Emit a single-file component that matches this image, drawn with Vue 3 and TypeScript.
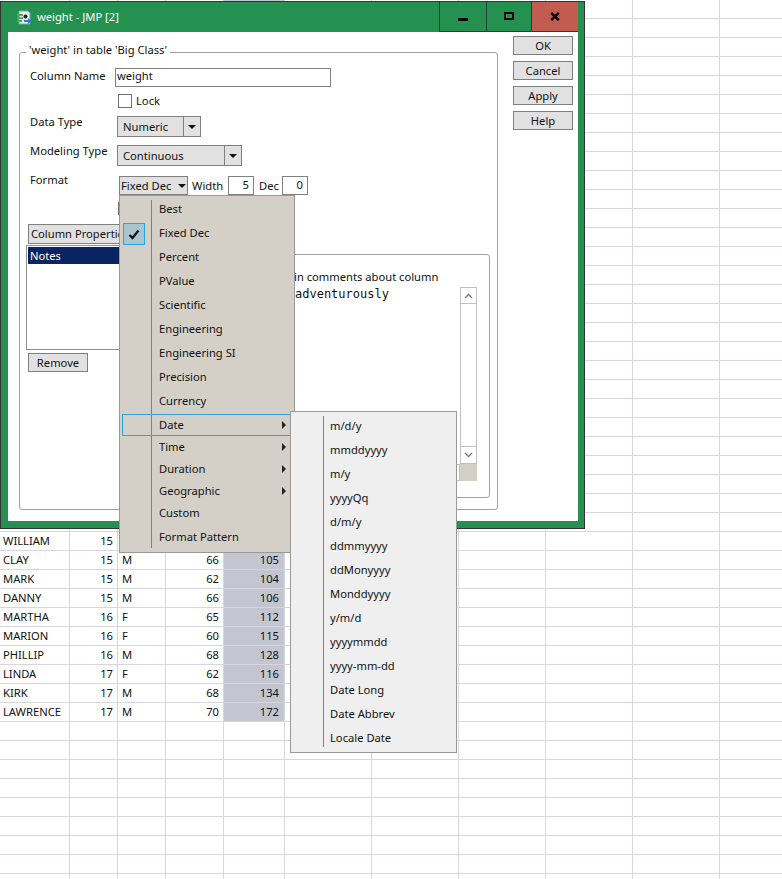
<script setup lang="ts">
interface Row { name: string; age: string; sex: string; height: string; weight: string; selected: boolean }

const visible: [string, string, string, string, string][] = [
  ['WILLIAM', '15', '', '', ''],
  ['CLAY', '15', 'M', '66', '105'],
  ['MARK', '15', 'M', '62', '104'],
  ['DANNY', '15', 'M', '66', '106'],
  ['MARTHA', '16', 'F', '65', '112'],
  ['MARION', '16', 'F', '60', '115'],
  ['PHILLIP', '16', 'M', '68', '128'],
  ['LINDA', '17', 'F', '62', '116'],
  ['KIRK', '17', 'M', '68', '134'],
  ['LAWRENCE', '17', 'M', '70', '172'],
]
const firstVisible = 28
const rows: Row[] = Array.from({ length: 47 }, (_, i) => {
  const v = visible[i - firstVisible]
  return {
    name: v ? v[0] : '', age: v ? v[1] : '', sex: v ? v[2] : '', height: v ? v[3] : '', weight: v ? v[4] : '',
    selected: i < firstVisible + visible.length,
  }
})
const blankCols = [1, 2, 3, 4, 5, 6]

const formats = [
  { label: 'Best' }, { label: 'Fixed Dec', checked: true }, { label: 'Percent' }, { label: 'PValue' },
  { label: 'Scientific' }, { label: 'Engineering' }, { label: 'Engineering SI' }, { label: 'Precision' },
  { label: 'Currency' }, { label: 'Date', sub: true, hot: true }, { label: 'Time', sub: true },
  { label: 'Duration', sub: true }, { label: 'Geographic', sub: true }, { label: 'Custom', short: true },
  { label: 'Format Pattern', last: true },
]
const dates = ['m/d/y', 'mmddyyyy', 'm/y', 'yyyyQq', 'd/m/y', 'ddmmyyyy', 'ddMonyyyy', 'Monddyyyy', 'y/m/d',
  'yyyymmdd', 'yyyy-mm-dd', 'Date Long', 'Date Abbrev', 'Locale Date']
const actions = ['OK', 'Cancel', 'Apply', 'Help']
</script>

<template>
  <div class="desk">
    <div class="sheet">
      <div v-for="(r, i) in rows" :key="i" class="row">
        <div class="cell c-name">{{ r.name }}</div>
        <div class="cell c-age">{{ r.age }}</div>
        <div class="cell c-sex">{{ r.sex }}</div>
        <div class="cell c-height">{{ r.height }}</div>
        <div class="cell c-weight" :class="{ sel: r.selected }">{{ r.weight }}</div>
        <div v-for="c in blankCols" :key="c" class="cell c-blank"></div>
      </div>
    </div>

    <div class="dialog">
      <div class="titlebar">
        <svg class="appicon" width="16" height="16" viewBox="0 0 16 16">
          <path d="M3 1h9l2 2v11H3z" fill="#e8eef4" stroke="#7f9fb8" stroke-width="1" />
          <path d="M1 4h6v2H1zM1 7h6v2H1zM1 10h5v2H1z" fill="#43b649" />
          <circle cx="9.500" cy="6.500" r="2" fill="#222" />
          <path d="M8 10h4V8l3.500 3-3.500 3v-2H8z" fill="#2f7fd0" />
        </svg>
        <span class="title">weight - JMP [2]</span>
        <div class="winbtns">
          <div class="winbtn w-min"><span class="ico-min"></span></div>
          <div class="winbtn w-max"><span class="ico-max"></span></div>
          <div class="winbtn w-close">
            <svg width="10" height="9" viewBox="0 0 10 9"><path d="M1.200 .8l7.600 7.400M8.800 .8L1.200 8.200" stroke="#000" stroke-width="2.400" fill="none" /></svg>
          </div>
        </div>
      </div>

      <div class="client">
        <div class="group">
          <span class="legend">'weight' in table 'Big Class'</span>

          <div class="frow r-name">
            <span class="lbl l-name">Column Name</span>
            <div class="field f-name">weight</div>
          </div>
          <div class="frow r-lock">
            <span class="box"></span><span class="lock-lbl">Lock</span>
          </div>
          <div class="frow r-type">
            <span class="lbl l-sel">Data Type</span>
            <div class="combo c-numeric"><span class="combo-text">Numeric</span><span class="combo-arrow"><i class="tri"></i></span></div>
          </div>
          <div class="frow r-model">
            <span class="lbl l-sel">Modeling Type</span>
            <div class="combo c-cont"><span class="combo-text">Continuous</span><span class="combo-arrow"><i class="tri"></i></span></div>
          </div>
          <div class="frow r-format">
            <span class="lbl l-fmt">Format</span>
            <div class="fmt-btn"><span>Fixed Dec</span><i class="tri"></i></div>
            <span class="w-lbl">Width</span>
            <div class="num n-width">5</div>
            <span class="d-lbl">Dec</span>
            <div class="num n-dec">0</div>
          </div>
          <div class="frow r-hidden"><span class="box small"></span></div>

          <div class="props">
            <div class="props-left">
              <div class="prop-btn">Column Properties</div>
              <div class="listbox"><div class="list-sel">Notes</div></div>
              <div class="btn remove">Remove</div>
            </div>
            <div class="inner">
              <div class="hint">in comments about column</div>
              <div class="memo">
                <div class="memo-text">adventurously</div>
                <div class="vbar">
                  <div class="sbtn">
                    <svg width="9" height="6" viewBox="0 0 9 6"><path d="M1 5l3.500-3.500L8 5" stroke="#777" stroke-width="1.300" fill="none" /></svg>
                  </div>
                  <div class="strack"></div>
                  <div class="sbtn down">
                    <svg width="9" height="6" viewBox="0 0 9 6"><path d="M1 1l3.500 3.500L8 1" stroke="#777" stroke-width="1.300" fill="none" /></svg>
                  </div>
                </div>
                <div class="hbar"></div>
                <div class="corner"></div>
              </div>
            </div>
          </div>
        </div>

        <div class="actions">
          <div v-for="a in actions" :key="a" class="btn action">{{ a }}</div>
        </div>
      </div>
    </div>

    <div class="menu main">
      <div
        v-for="f in formats"
        :key="f.label"
        class="item"
        :class="{ hot: f.hot, sub: f.sub, short: f.short, last: f.last }"
      >
        <span v-if="f.checked" class="check">
          <svg width="12" height="11" viewBox="0 0 12 11"><path d="M1.500 6l3 3L10.500 1.500" stroke="#111" stroke-width="2.300" fill="none" /></svg>
        </span>
        <span>{{ f.label }}</span>
        <i v-if="f.sub" class="sub-arrow"></i>
      </div>
    </div>

    <div class="menu dates">
      <div v-for="d in dates" :key="d" class="item">{{ d }}</div>
    </div>
  </div>
</template>

<style>
html, body { margin: 0; background: #fff; }
</style>

<style scoped>
.desk {
  position: relative;
  width: 782px;
  height: 879px;
  overflow: hidden;
  background: #fff;
  font-family: "Noto Sans", "Liberation Sans", sans-serif;
  font-size: 11.2px;
  color: #111;
}

/* spreadsheet */
.sheet { display: flex; flex-direction: column; }
.row { display: flex; height: 19px; flex: none; }
.cell {
  box-sizing: border-box;
  height: 19px;
  line-height: 15px;
  padding-top: 1px;
  border-right: 1px solid #d6d6e0;
  border-bottom: 1px solid #d6d6e0;
  flex: none;
  white-space: nowrap;
}
.c-name { width: 70px; padding-left: 3px; }
.c-age { width: 48px; padding-right: 4px; text-align: right; }
.c-sex { width: 48px; padding-left: 4px; }
.c-height { width: 58px; padding-right: 4px; text-align: right; }
.c-weight { width: 61px; padding-right: 5px; text-align: right; }
.c-weight.sel { background: #c3c6d0; }
.c-blank { width: 87px; }

/* window */
.dialog {
  position: absolute;
  left: 0;
  top: 1px;
  width: 585px;
  height: 528px;
  box-sizing: border-box;
  border: 1px solid #333;
  background: #259150;
  display: flex;
  flex-direction: column;
}
.titlebar { height: 30px; flex: none; display: flex; align-items: center; padding-left: 15px; }
.appicon { flex: none; margin-top: 1px; }
.title { color: #fff; margin-left: 5px; margin-top: -2px; }
.winbtns { margin-left: auto; margin-right: 6px; display: flex; height: 30px; border-left: 1px solid #2c3b32; }
.winbtn {
  box-sizing: border-box;
  height: 30px;
  border-right: 1px solid #2c3b32;
  border-bottom: 1px solid #2c3b32;
  display: flex;
  align-items: center;
  justify-content: center;
}
.w-min { width: 47px; }
.w-max { width: 45px; }
.w-close { width: 46px; background: #c25b50; border-right: none; }
.ico-min { width: 10px; height: 3px; background: #000; margin-top: 6px; }
.ico-max { width: 10px; height: 8px; box-sizing: border-box; border: 2px solid #000; margin-top: -1px; }
.w-close svg { margin-top: -1px; }

.client {
  flex: 1;
  min-height: 0;
  margin: 0 6px 7px 7px;
  background: #fff;
  display: flex;
  align-items: flex-start;
}

/* outer group */
.group {
  position: relative;
  box-sizing: border-box;
  width: 479px;
  height: 458px;
  margin: 20px 0 0 11px;
  border: 1px solid #a0a0a0;
  border-radius: 3px;
  padding: 15px 0 0 6px;
}
.legend {
  position: absolute;
  left: 6px;
  top: -11px;
  background: #fff;
  padding: 0 3px;
  line-height: 16px;
}
.frow { display: flex; align-items: flex-start; padding-left: 4px; }
.lbl { line-height: 16px; }
.l-name { width: 85px; }
.r-name { height: 19px; }
.field {
  box-sizing: border-box;
  width: 216px;
  height: 19px;
  border: 1px solid #808080;
  line-height: 13px;
  padding-left: 1px;
}
.r-lock { margin-top: 7px; padding-left: 92px; align-items: center; gap: 4px; height: 14px; }
.lock-lbl { margin-top: -2px; }
.box { width: 14px; height: 14px; box-sizing: border-box; border: 1px solid #707070; background: #fff; flex: none; }
.r-type { margin-top: 8px; height: 21px; }
.r-model { margin-top: 8px; height: 21px; }
.l-sel { width: 87px; margin-top: -2px; }
.combo {
  box-sizing: border-box;
  height: 21px;
  border: 1px solid #808080;
  background: #e1e1e1;
  display: flex;
  align-items: center;
}
.c-numeric { width: 84px; }
.c-cont { width: 125px; }
.combo-text { flex: 1; padding-left: 5px; }
.combo-arrow {
  width: 16px;
  height: 19px;
  border-left: 1px solid #808080;
  display: flex;
  align-items: center;
  justify-content: center;
}
.tri {
  display: block;
  width: 0;
  height: 0;
  border-left: 4px solid transparent;
  border-right: 4px solid transparent;
  border-top: 4px solid #111;
}
.r-format { margin-top: 10px; height: 19px; align-items: center; }
.l-fmt { width: 89px; margin-top: -11px; }
.fmt-btn {
  box-sizing: border-box;
  width: 69px;
  height: 19px;
  border: 1px solid #808080;
  background: #e1e1e1;
  display: flex;
  align-items: center;
  justify-content: space-between;
  padding: 0 1px 0 1px;
}
.w-lbl { margin-left: 4px; width: 36px; }
.num {
  box-sizing: border-box;
  width: 26px;
  height: 19px;
  border: 1px solid #808080;
  text-align: right;
  padding-right: 4px;
  line-height: 15px;
}
.d-lbl { margin-left: 5px; width: 23px; }
.r-hidden { margin-top: 7px; height: 13px; padding-left: 92px; }
.box.small { height: 13px; width: 13px; }

/* column properties */
.props { display: flex; align-items: flex-start; margin-top: 9px; }
.props-left { width: 114px; flex: none; display: flex; flex-direction: column; }
.prop-btn {
  box-sizing: border-box;
  width: 112px;
  height: 20px;
  margin-left: 2px;
  border: 1px solid #808080;
  background: #e1e1e1;
  line-height: 18px;
  padding-left: 2px;
  white-space: nowrap;
  overflow: hidden;
}
.listbox {
  box-sizing: border-box;
  width: 114px;
  height: 105px;
  margin-top: 1px;
  border: 1px solid #909090;
  padding: 1px;
}
.list-sel { height: 17px; line-height: 17px; background: #0a2463; color: #fff; padding-left: 2px; }
.btn {
  box-sizing: border-box;
  border: 1px solid #7f7f7f;
  background: #e1e1e1;
  text-align: center;
}
.remove { width: 60px; height: 19px; margin: 3px 0 0 2px; line-height: 17px; }

.inner {
  box-sizing: border-box;
  width: 350px;
  height: 244px;
  margin: 30px 0 0 0;
  border: 1px solid #a0a0a0;
  border-radius: 3px;
  padding: 14px 12px 0 153px;
  display: flex;
  flex-direction: column;
}
.hint { line-height: 16px; white-space: nowrap; }
.memo {
  display: grid;
  grid-template-columns: 1fr 17px;
  grid-template-rows: 177px 17px;
  margin-top: 2px;
}
.memo-text {
  font-family: "DejaVu Sans Mono", "Liberation Mono", monospace;
  font-size: 12px;
  line-height: 14px;
  padding: 0 0 0 1px;
}
.vbar { box-sizing: border-box; border: 1px solid #c0c0c0; display: flex; flex-direction: column; }
.sbtn { height: 15px; flex: none; display: flex; align-items: center; justify-content: center; border-bottom: 1px solid #c0c0c0; }
.sbtn.down { border-bottom: none; border-top: 1px solid #c0c0c0; height: 16px; }
.strack { flex: 1; }
.hbar { border: 1px solid #c0c0c0; }
.corner { background: #d4d0c8; }

.actions {
  margin: 4px 0 0 15px;
  display: flex;
  flex-direction: column;
  gap: 6px;
}
.action { width: 60px; height: 19px; line-height: 17px; }

/* popup menus */
.menu {
  position: absolute;
  box-sizing: border-box;
  border: 1px solid #999;
}
.menu::before {
  content: "";
  position: absolute;
  width: 1px;
  background: #808080;
}
.main {
  left: 119px;
  top: 195px;
  width: 176px;
  height: 358px;
  background: #d4d0c8;
  padding: 1px 1px 0 2px;
}
.main::before { left: 31px; top: 4px; height: 348px; }
.item {
  position: relative;
  box-sizing: border-box;
  height: 24px;
  border: 1px solid transparent;
  padding: 0 6px 2px 36px;
  display: flex;
  align-items: center;
  justify-content: space-between;
  white-space: nowrap;
}
.item.sub, .item.short { height: 22px; }
.item.hot { margin-top: 1px; border-color: #2ba6e0; }
.item.last { margin-top: 1px; }
.check {
  position: absolute;
  left: 0;
  top: 1px;
  box-sizing: border-box;
  width: 22px;
  height: 22px;
  background: #a8c6d2;
  border: 1px solid #2ca4dc;
  display: flex;
  align-items: center;
  justify-content: center;
}
.sub-arrow {
  display: block;
  width: 0;
  height: 0;
  margin-top: 2px;
  border-top: 4px solid transparent;
  border-bottom: 4px solid transparent;
  border-left: 4px solid #222;
}
.dates {
  left: 290px;
  top: 411px;
  width: 167px;
  height: 342px;
  background: #efefef;
  padding-top: 2px;
}
.dates::before { left: 32px; top: 4px; height: 331px; }
.dates .item { padding-left: 38px; }
</style>
